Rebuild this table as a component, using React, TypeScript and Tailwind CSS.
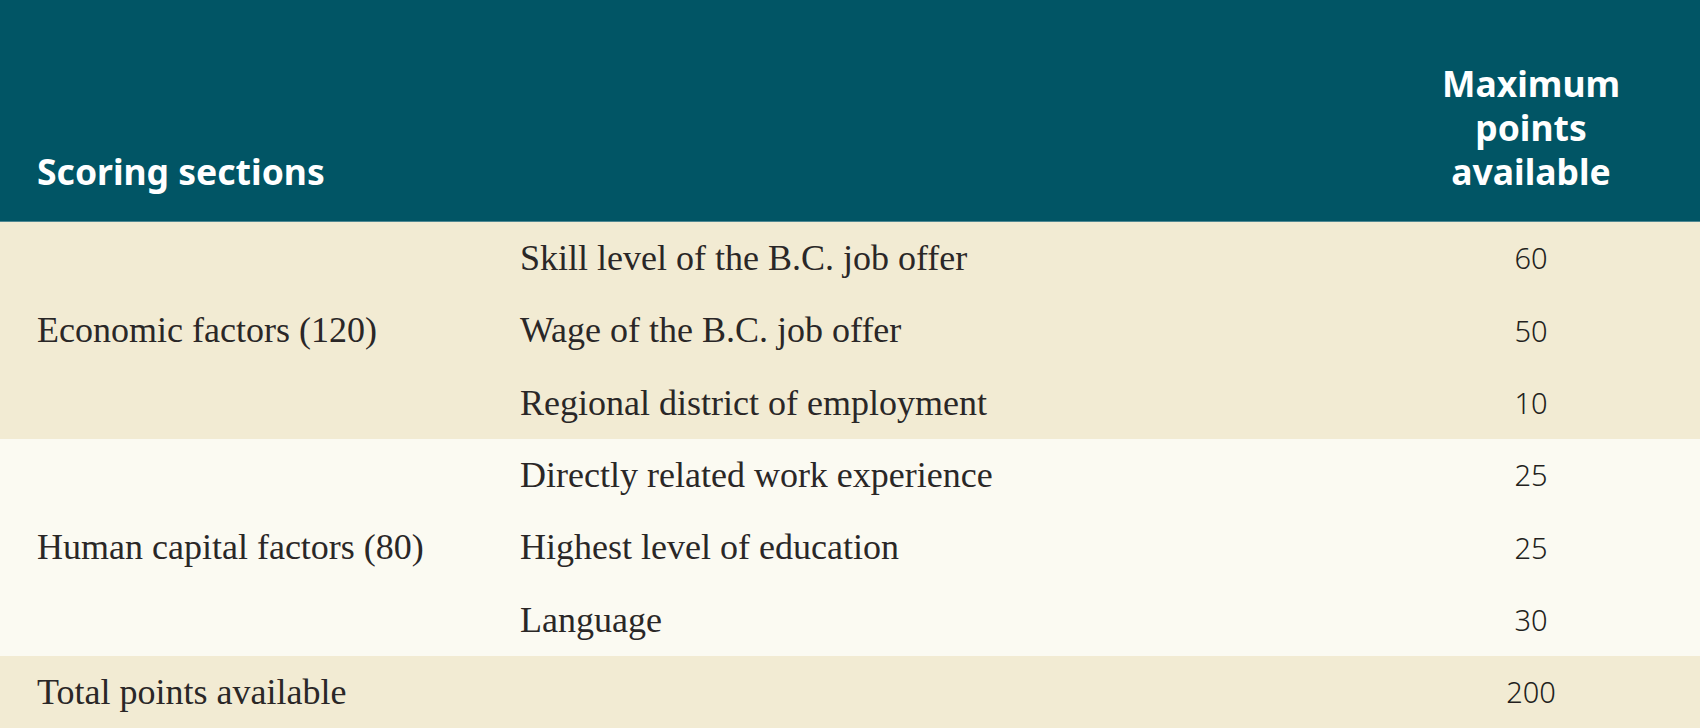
import React from "react";

const serif = "font-['Liberation_Serif',serif] text-[36px] text-[#2a2727]";
const num = "font-['Noto_Sans',sans-serif] font-light text-[29px] text-[#231f20]";

function Block({
  label,
  rows,
  bg,
}: {
  label: React.ReactNode;
  rows: [string, string][];
  bg: string;
}) {
  return (
    <div className={`grid grid-cols-[483px_879px_338px] grid-rows-[repeat(3,72.33px)] ${bg}`}>
      <div className={`row-span-3 flex items-center pl-[37px] ${serif}`}>{label}</div>
      {rows.map(([name, pts], i) => (
        <React.Fragment key={i}>
          <div className={`col-start-2 flex items-center pl-[37px] ${serif}`} style={{ gridRow: i + 1 }}>
            {name}
          </div>
          <div className={`col-start-3 flex items-center justify-center ${num}`} style={{ gridRow: i + 1 }}>
            {pts}
          </div>
        </React.Fragment>
      ))}
    </div>
  );
}

export default function App() {
  return (
    <div className="w-[1700px] h-[728px] flex flex-col overflow-hidden bg-[#fbfaf2]">
      <div className="grid grid-cols-[483px_879px_338px] h-[222px] bg-[#015565] border-b border-[#4f8791] items-end font-['Noto_Sans',sans-serif] font-bold text-white text-[35.5px] leading-[44px] pb-[28px]">
        <div className="pl-[37px]">Scoring sections</div>
        <div />
        <div className="text-center">
          Maximum
          <br />
          points
          <br />
          available
        </div>
      </div>
      <Block
        label="Economic factors (120)"
        bg="bg-[#f2ebd3]"
        rows={[
          ["Skill level of the B.C. job offer", "60"],
          ["Wage of the B.C. job offer", "50"],
          ["Regional district of employment", "10"],
        ]}
      />
      <Block
        label="Human capital factors (80)"
        bg="bg-[#fbfaf2]"
        rows={[
          ["Directly related work experience", "25"],
          ["Highest level of education", "25"],
          ["Language", "30"],
        ]}
      />
      <div className="grid grid-cols-[483px_879px_338px] flex-1 bg-[#f2ebd3]">
        <div className={`flex items-center pl-[37px] ${serif}`}>Total points available</div>
        <div />
        <div className={`flex items-center justify-center ${num}`}>200</div>
      </div>
    </div>
  );
}
